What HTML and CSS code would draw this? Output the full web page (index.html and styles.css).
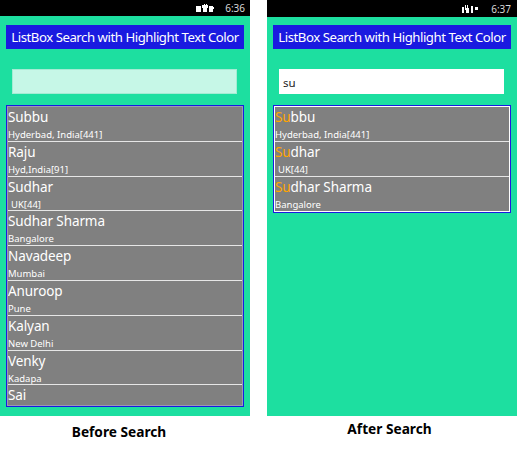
FILE: index.html
```html
<!DOCTYPE html>
<html lang="en">
<head>
<meta charset="utf-8">
<title>ListBox Search</title>
<link rel="stylesheet" href="styles.css">
</head>
<body>
<main class="shots">
  <section class="shot">
    <div class="phone">
      <div class="status status-a">
        <svg class="sig" viewBox="0 0 18 8" width="18" height="8"><path d="M0 2h5v6H0zM6 1h2V0h1v1h1V0h1v1h1v3h-1v4H7V4H6zM13 2h4v1h1v2h-1v3h-4z" fill="#fff"/></svg>
        <span class="clock">6:36</span>
      </div>
      <h1 class="title title-a">ListBox Search with Highlight Text Color</h1>
      <div class="search search-empty"></div>
      <ul class="list list-soft">
        <li class="row"><span class="name">Subbu</span><span class="sub">Hyderbad, India[441]</span></li>
        <li class="row"><span class="name">Raju</span><span class="sub">Hyd,India[91]</span></li>
        <li class="row"><span class="name">Sudhar</span><span class="sub sub-in">UK[44]</span></li>
        <li class="row"><span class="name">Sudhar Sharma</span><span class="sub">Bangalore</span></li>
        <li class="row"><span class="name">Navadeep</span><span class="sub">Mumbai</span></li>
        <li class="row"><span class="name">Anuroop</span><span class="sub">Pune</span></li>
        <li class="row"><span class="name">Kalyan</span><span class="sub">New Delhi</span></li>
        <li class="row"><span class="name">Venky</span><span class="sub">Kadapa</span></li>
        <li class="row row-short"><span class="name">Sai</span></li>
      </ul>
    </div>
    <p class="caption">Before Search</p>
  </section>
  <section class="shot">
    <div class="phone">
      <div class="status status-b">
        <svg class="sig" viewBox="0 0 18 8" width="18" height="8"><path d="M0 2h2v6H0zM3 0h1v3h1V0h1v3h1v5H4V5H3zM9 1h2v7H9zM13 2h3v3h-3z" fill="#fff"/></svg>
        <span class="clock">6:37</span>
      </div>
      <h1 class="title">ListBox Search with Highlight Text Color</h1>
      <div class="search search-filled">su</div>
      <ul class="list list-crisp">
        <li class="row"><span class="name"><b class="hit">Su</b>bbu</span><span class="sub">Hyderbad, India[441]</span></li>
        <li class="row"><span class="name"><b class="hit">Su</b>dhar</span><span class="sub sub-in">UK[44]</span></li>
        <li class="row row-end"><span class="name"><b class="hit">Su</b>dhar Sharma</span><span class="sub">Bangalore</span></li>
      </ul>
    </div>
    <p class="caption caption-up">After Search</p>
  </section>
</main>
</body>
</html>
```
FILE: styles.css
```css
* { box-sizing: border-box; }
html, body { margin: 0; padding: 0; background: #fff; }
body { width: 517px; height: 449px; overflow: hidden; font-family: "Noto Sans", "Open Sans", sans-serif; }
.shots { display: flex; gap: 17px; }
.shot { width: 250px; display: flex; flex-direction: column; }
.phone { height: 416px; background: #1ddfa0; display: flex; flex-direction: column; align-items: stretch; }
.status { height: 17px; background: #000; display: flex; justify-content: flex-end; align-items: center; flex: none; padding-right: 5px; }
.status-a { height: 16px; gap: 11px; }
.status-b { gap: 11px; padding-right: 6px; }
.sig { display: block; }
.clock { color: #d8d8d8; font-size: 10px; line-height: 16px; }
.title { margin: 8px 6px 0; height: 24px; background: #1a1ae0; color: #fff; font-size: 13.2px; letter-spacing: -0.46px; font-weight: 400; line-height: 24px; text-align: center; white-space: nowrap; flex: none; }
.title-a { margin-top: 9px; }
.search { margin: 20px 13.5px 0 12px; height: 25px; flex: none; font-size: 11.5px; line-height: 27px; padding-left: 4px; color: #222; }
.search-empty { background: #c6f7e7; border: 1px solid #a4ecd4; }
.search-filled { background: #fff; }
.list { list-style: none; margin: 11px 6px 0; padding: 1px; border: 1px solid #1a1ae0; background: #808080; }
.list-soft { box-shadow: inset 0 0 0 1px #9a9ab4; }
.list-crisp { box-shadow: inset 0 0 0 1px #fff; }
.row { height: 34.8px; display: flex; flex-direction: column; border-bottom: 1px solid #e6e6e6; overflow: hidden; }
.row-short { height: 20px; border-bottom: 0; }
.row-end { height: 34px; border-bottom: 0; }
.name { color: #fff; font-size: 13.5px; letter-spacing: -0.1px; line-height: 21px; height: 21px; white-space: nowrap; }
.sub { color: #fff; font-size: 9.5px; line-height: 14px; height: 13px; white-space: nowrap; }
.sub-in { padding-left: 3px; }
.hit { color: #ffa500; font-weight: 400; }
.caption { margin: 7px 0 0; text-align: center; color: #000; font-size: 13.7px; font-weight: 700; line-height: 18px; padding-right: 12px; }
.caption-up { margin-top: 4px; padding-right: 5px; }
```
